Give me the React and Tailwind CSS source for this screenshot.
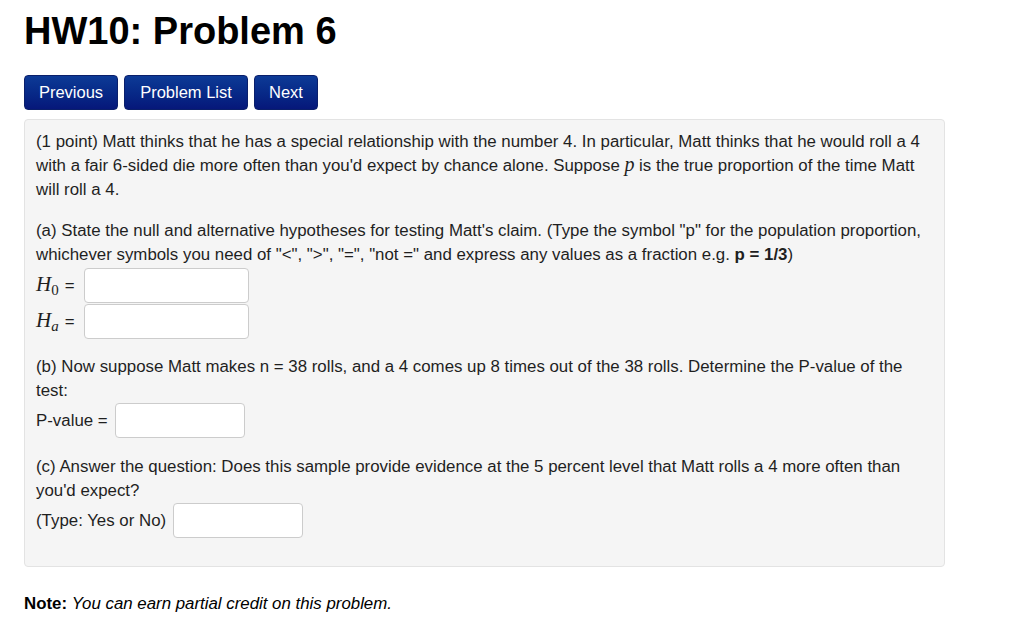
export default function App() {
  const sans = { fontFamily: '"Liberation Sans", Arial, sans-serif' }
  return (
    <div className="min-h-screen bg-white text-[#1f1f1f] px-6" style={sans}>
      <h1 className="pt-[10px] text-[38px] leading-[42px] font-bold text-black">HW10: Problem 6</h1>

      <div className="flex gap-[6px] mt-[23px]">
        <NavButton className="w-[94px]">Previous</NavButton>
        <NavButton className="w-[124px]">Problem List</NavButton>
        <NavButton className="w-[64px]">Next</NavButton>
      </div>

      <div className="mt-[9px] w-[921px] h-[448px] bg-[#f5f5f5] border border-[#e3e3e3] rounded-[4px] px-[11px] pt-[10px] text-[16.85px] leading-[24px] whitespace-nowrap">
        <p>
          (1 point) Matt thinks that he has a special relationship with the number 4. In particular, Matt thinks that he would roll a 4
          <br />
          with a fair 6-sided die more often than you'd expect by chance alone. Suppose <M>p</M> is the true proportion of the time Matt
          <br />
          will roll a 4.
        </p>

        <p className="mt-[17px]">
          (a) State the null and alternative hypotheses for testing Matt's claim. (Type the symbol "p" for the population proportion,
          <br />
          whichever symbols you need of "&lt;", "&gt;", "=", "not =" and express any values as a fraction e.g. <b>p = 1/3</b>)
        </p>
        <div className="flex items-center mt-[1px] h-[34px]">
          <Hyp sub="0" />
          <Box className="w-[165px]" />
        </div>
        <div className="flex items-center mt-[2px] h-[34px]">
          <Hyp sub="a" italic />
          <Box className="w-[165px]" />
        </div>

        <p className="mt-[17px]">
          (b) Now suppose Matt makes n = 38 rolls, and a 4 comes up 8 times out of the 38 rolls. Determine the P-value of the
          <br />
          test:
        </p>
        <div className="flex items-center gap-[7px] h-[35px]">
          <span>P-value =</span>
          <Box className="w-[130px]" />
        </div>

        <p className="mt-[17px]">
          (c) Answer the question: Does this sample provide evidence at the 5 percent level that Matt rolls a 4 more often than
          <br />
          you'd expect?
        </p>
        <div className="flex items-center gap-[7px] h-[35px]">
          <span>(Type: Yes or No)</span>
          <Box className="w-[130px]" />
        </div>
      </div>

      <p className="mt-[25px] text-[16.85px] leading-[24px] text-black">
        <b>Note:</b> <i>You can earn partial credit on this problem.</i>
      </p>
    </div>
  )
}

function NavButton({ className, children }) {
  return (
    <button
      className={`h-[35px] rounded-[4px] border border-[#0a1f6b] bg-gradient-to-b from-[#0d3a96] to-[#06177a] text-white text-[16.5px] flex items-center justify-center ${className}`}
    >
      {children}
    </button>
  )
}

function Box({ className }) {
  return <div className={`h-[35px] bg-white border border-[#cccccc] rounded-[4px] ${className}`} />
}

function Hyp({ sub, italic }) {
  const serif = { fontFamily: '"Liberation Serif", "DejaVu Serif", serif' }
  return (
    <span className="w-[48px] flex items-baseline">
      <span className="italic text-[21px]" style={serif}>H</span>
      <span className={`text-[15px] relative top-[4px] ${italic ? 'italic' : ''}`} style={serif}>{sub}</span>
      <span className="ml-[6px]">=</span>
    </span>
  )
}

function M({ children }) {
  return (
    <span className="italic text-[20px] leading-[0]" style={{ fontFamily: '"Liberation Serif", "DejaVu Serif", serif' }}>
      {children}
    </span>
  )
}
